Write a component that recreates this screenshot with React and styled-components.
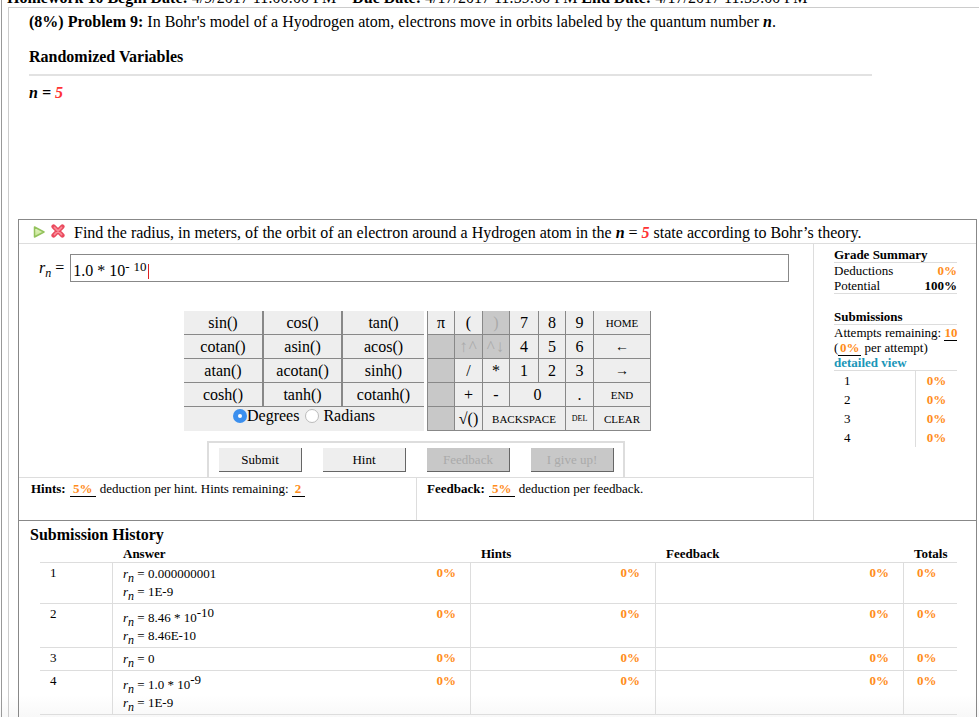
import React from 'react';
import styled, { createGlobalStyle } from 'styled-components';

const Global = createGlobalStyle`
  html, body { margin: 0; padding: 0; background: #fff; }
  body { font-family: "Liberation Serif", "Times New Roman", serif; color: #000; }
`;

const orange = '#ff8c1a';
const historyCols = '73px 358px 185px 248px 53px';

const Page = styled.div`
  width: 979px;
  height: 717px;
  overflow: hidden;
  box-sizing: border-box;
  padding-left: 1px;
  background: linear-gradient(#fff 695px, #f8f8f8 717px);
`;
const OuterRail = styled.div`
  border-left: 1px solid #999;
  height: 100%;
  padding-left: 6px;
`;
const TopStrip = styled.div`
  height: 7px;
  overflow: hidden;
  margin-left: -1px;
  font-size: 16px;
  line-height: 18px;
  white-space: pre;
  & > div { margin-top: -11px; }
`;
const Frame = styled.div`
  border-left: 1px solid #ccc;
  border-top: 1px solid #ccc;
  height: 100%;
  padding-left: 9px;
  padding-top: 5px;
`;
const Problem = styled.div`
  height: 206px;
  box-sizing: border-box;
  padding-left: 11px;
  font-size: 16px;
`;
const Line = styled.div`
  line-height: 18px;
  white-space: nowrap;
`;
const Heading = styled.div`
  font-weight: bold;
  line-height: 18px;
  margin-top: 17px;
  padding-bottom: 8px;
  width: 843px;
  border-bottom: 2px solid #e2e2e2;
`;
const VarLine = styled.div`
  margin-top: 8px;
  line-height: 18px;
  font-weight: bold;
  font-style: italic;
`;
const Red = styled.b`
  color: #f33;
  font-style: italic;
`;
const Box = styled.div`
  width: 959px;
  border: 1px solid #888;
  border-bottom: 0;
  box-sizing: border-box;
  height: 500px;
`;
const QuestionBar = styled.div`
  height: 24px;
  box-sizing: border-box;
  display: flex;
  align-items: center;
  padding: 1px 0 0 14px;
  border-bottom: 1px solid #ddd;
  font-size: 16px;
  white-space: nowrap;
`;
const QuestionText = styled.span`
  margin-left: 9px;
  margin-top: 1px;
`;
const Body = styled.div`
  height: 276px;
  display: grid;
  grid-template-columns: 795px 1fr;
  border-bottom: 1px solid #888;
`;
const Main = styled.div`
  border-right: 1px solid #ddd;
  display: flex;
  flex-direction: column;
`;
const AnswerRow = styled.div`
  display: flex;
  align-items: center;
  gap: 6px;
  padding: 10px 0 0 20px;
  font-size: 16px;
`;
const AnswerInput = styled.div`
  width: 715px;
  height: 26px;
  border: 1px solid #888;
  line-height: 31px;
  padding-left: 2px;
  font-size: 16px;
`;
const Caret = styled.span`
  display: inline-block;
  width: 1px;
  height: 15px;
  margin-left: 1px;
  background: #d22;
  vertical-align: -3px;
`;
const Sup = styled.span`
  font-size: 13px;
  line-height: 0;
  vertical-align: 5px;
`;
const Rn = styled.span`
  font-style: italic;
`;
const Sub = styled.sub`
  font-style: italic;
  font-size: 12px;
  line-height: 0;
`;
const Keypad = styled.div`
  display: flex;
  gap: 3px;
  margin: 29px 0 0 165px;
`;
const FuncPad = styled.div`
  display: grid;
  grid-template-columns: 80px 79px 81px;
  grid-template-rows: repeat(5, 24px);
  width: 240px;
`;
const NumPad = styled.div`
  display: grid;
  grid-template-columns: 27px 28px 27px 29px 27px 28px 57px;
  grid-template-rows: repeat(5, 24px);
  border-left: 1px solid #888;
`;
const Key = styled.div`
  display: flex;
  align-items: center;
  justify-content: center;
  background: ${(p) => (p.$off ? '#c8c8c8' : '#eee')};
  color: ${(p) => (p.$off ? '#aaa' : '#000')};
  border-right: 1px solid #888;
  border-bottom: 1px solid #888;
  box-sizing: border-box;
  font-size: ${(p) => p.$size || 16}px;
  grid-column: span ${(p) => p.$span || 1};
  white-space: nowrap;
`;
const ArrowKey = styled(Key)`
  letter-spacing: 1px;
`;
const FuncKey = styled(Key)`
  border-right: 2px solid #888;
  &:nth-child(3n) { border-right: 0; }
`;
const AngleRow = styled.div`
  grid-column: span 3;
  background: #eee;
  display: flex;
  align-items: flex-start;
  justify-content: center;
  font-size: 16px;
  line-height: 18px;
  padding-right: 3px;
`;
const Radio = styled.span`
  width: 14px;
  height: 14px;
  border-radius: 50%;
  box-sizing: border-box;
  margin: ${(p) => (p.$on ? '2px 0 0 3px' : '2px 4px 0 6px')};
  background: ${(p) => (p.$on ? '#3b8fee' : '#fff')};
  border: ${(p) => (p.$on ? '0' : '1px solid #bbb')};
  display: flex;
  align-items: center;
  justify-content: center;
  &::after {
    content: '';
    width: 4px;
    height: 4px;
    border-radius: 50%;
    background: ${(p) => (p.$on ? '#fff' : 'transparent')};
  }
`;
const ButtonBar = styled.div`
  width: 418px;
  height: 36px;
  box-sizing: border-box;
  margin: 10px 0 0 188px;
  border: 2px solid #ddd;
  border-bottom: 0;
  padding: 5px 0 0 10px;
  display: flex;
  gap: 21px;
`;
const Btn = styled.div`
  width: 83px;
  height: 24px;
  box-sizing: border-box;
  display: flex;
  align-items: center;
  justify-content: center;
  background: ${(p) => (p.$off ? '#c8c8c8' : '#eee')};
  color: ${(p) => (p.$off ? '#aaa' : '#000')};
  border-right: 1px solid #666;
  border-bottom: 1px solid #666;
  font-size: 13px;
`;
const Deductions = styled.div`
  flex: 1;
  display: grid;
  grid-template-columns: 398px 1fr;
  border-top: 1px solid #ddd;
  font-size: 13px;
`;
const DeductCell = styled.div`
  padding: 3px 0 0 ${(p) => p.$pad}px;
  line-height: 16px;
  white-space: nowrap;
  ${(p) => p.$divider && 'border-right: 1px solid #ddd;'}
`;
const Blank = styled.span`
  display: inline-block;
  border-bottom: 1px solid #000;
  color: ${orange};
  font-weight: bold;
  text-align: center;
  width: ${(p) => p.$w}px;
  margin: 0 ${(p) => p.$m ?? 4}px;
  line-height: 15px;
`;
const Side = styled.div`
  padding: 3px 0 0 20px;
  width: 123px;
  font-size: 13px;
`;
const SideTitle = styled.div`
  font-weight: bold;
  line-height: 15px;
  border-bottom: 1px solid #ddd;
`;
const SideRow = styled.div`
  display: flex;
  justify-content: space-between;
  line-height: 15px;
  ${(p) => p.$ruled && 'border-bottom: 1px solid #ddd;'}
`;
const SideLine = styled.div`
  height: 15px;
  line-height: 15px;
  white-space: nowrap;
`;
const Gap = styled.div`
  height: 15px;
`;
const Pct = styled.b`
  color: ${(p) => p.$c || orange};
`;
const DetailLink = styled.div`
  color: #1a96b8;
  font-weight: bold;
  line-height: 15px;
  border-bottom: 1px solid #ddd;
`;
const AttemptTable = styled.div`
  display: grid;
  grid-template-columns: 82px 41px;
  grid-auto-rows: 19px;
  height: 81px;
`;
const AttemptNo = styled.div`
  border-right: 1px solid #ddd;
  padding-left: 10px;
  line-height: 19px;
`;
const AttemptPct = styled.div`
  text-align: center;
  line-height: 19px;
`;
const History = styled.div`
  padding: 5px 0 0 11px;
`;
const HistoryTitle = styled.div`
  font-size: 16px;
  font-weight: bold;
  line-height: 18px;
`;
const Table = styled.div`
  margin-left: 10px;
  width: 917px;
  font-size: 13px;
`;
const HeadRow = styled.div`
  display: grid;
  grid-template-columns: ${historyCols};
  height: 15px;
  margin-top: 2px;
  font-weight: bold;
  line-height: 15px;
  padding-bottom: 1px;
  border-bottom: 1px solid #ddd;
`;
const HeadCell = styled.div`
  padding-left: ${(p) => p.$pad || 0}px;
`;
const Row = styled.div`
  display: grid;
  grid-template-columns: ${historyCols};
  height: ${(p) => p.$h}px;
  box-sizing: border-box;
  border-bottom: 1px solid #ddd;
`;
const Cell = styled.div`
  padding: 2px 0 0 ${(p) => p.$pad || 0}px;
  line-height: 16px;
  border-right: 1px solid #ddd;
  ${(p) => p.$last && 'border-right: 0;'}
`;
const PctCell = styled(Cell)`
  text-align: right;
  padding-right: ${(p) => p.$right}px;
`;
const AnswerCell = styled(Cell)`
  display: grid;
  grid-template-columns: 1fr auto;
  align-content: start;
  padding-right: 14px;
`;
const AnswerLines = styled.div`
  margin-top: ${(p) => p.$top || 0}px;
`;
const AnswerLine = styled.div`
  height: 18px;
  line-height: 18px;
  white-space: nowrap;
`;

const Play = () => (
  <svg width="12" height="12" viewBox="0 0 12 12">
    <defs>
      <linearGradient id="playFill" x1="0" y1="0" x2="0" y2="1">
        <stop offset="0" stopColor="#e6f5c8" />
        <stop offset="1" stopColor="#c4e48e" />
      </linearGradient>
    </defs>
    <path d="M1.5 1 L11 6 L1.5 11 Z" fill="url(#playFill)" stroke="#93c25c" strokeWidth="1.5" strokeLinejoin="round" />
  </svg>
);
const Cross = () => (
  <svg width="14" height="14" viewBox="0 0 14 14" style={{ marginLeft: 6, marginTop: -2 }}>
    <path d="M2.6 2.6 L11.4 11.4 M11.4 2.6 L2.6 11.4" stroke="#ea4a5e" strokeWidth="4.4" strokeLinecap="round" />
    <path d="M3.4 3.4 L10.6 10.6 M10.6 3.4 L3.4 10.6" stroke="#f98c98" strokeWidth="1.6" strokeLinecap="round" />
  </svg>
);

const R = () => <><Rn>r</Rn><Sub>n</Sub></>;

const funcs = ['sin()', 'cos()', 'tan()', 'cotan()', 'asin()', 'acos()', 'atan()', 'acotan()', 'sinh()', 'cosh()', 'tanh()', 'cotanh()'];

const rows = [
  { h: 41, n: 1, top: 0, a: [<>= 0.000000001</>, <>= 1E-9</>] },
  { h: 44, n: 2, top: 3, a: [<>= 8.46 * 10<Sup>-10</Sup></>, <>= 8.46E-10</>] },
  { h: 23, n: 3, top: 0, a: [<>= 0</>] },
  { h: 44, n: 4, top: 3, a: [<>= 1.0 * 10<Sup>-9</Sup></>, <>= 1E-9</>] },
];

export default function App() {
  return (
    <Page>
      <Global />
      <OuterRail>
        <TopStrip>
          <div><b>Homework 10 Begin Date:</b> 4/9/2017 11:00:00 PM    <b>Due Date:</b> 4/17/2017 11:59:00 PM <b>End Date:</b> 4/17/2017 11:59:00 PM</div>
        </TopStrip>
        <Frame>
          <Problem>
            <Line><b>(8%) Problem 9:</b> In Bohr's model of a Hyodrogen atom, electrons move in orbits labeled by the quantum number <b><i>n</i></b>.</Line>
            <Heading>Randomized Variables</Heading>
            <VarLine>n = <Red>5</Red></VarLine>
          </Problem>
          <Box>
            <QuestionBar>
              <Play />
              <Cross />
              <QuestionText>Find the radius, in meters, of the orbit of an electron around a Hydrogen atom in the <b><i>n</i></b> = <Red>5</Red> state according to Bohr’s theory.</QuestionText>
            </QuestionBar>
            <Body>
              <Main>
                <AnswerRow>
                  <span><R /> =</span>
                  <AnswerInput>1.0 * 10<Sup>-</Sup> <Sup>10</Sup><Caret /></AnswerInput>
                </AnswerRow>
                <Keypad>
                  <FuncPad>
                    {funcs.map((f) => <FuncKey key={f}>{f}</FuncKey>)}
                    <AngleRow><Radio $on />Degrees<Radio />Radians</AngleRow>
                  </FuncPad>
                  <NumPad>
                    <Key>π</Key><Key>(</Key><Key $off>)</Key><Key>7</Key><Key>8</Key><Key>9</Key><Key $size={11}>HOME</Key>
                    <Key $off /><ArrowKey $off $size={17}>↑^</ArrowKey><ArrowKey $off $size={17}>^↓</ArrowKey><Key>4</Key><Key>5</Key><Key>6</Key><Key $size={14}>←</Key>
                    <Key $off /><Key>/</Key><Key>*</Key><Key>1</Key><Key>2</Key><Key>3</Key><Key $size={14}>→</Key>
                    <Key $off /><Key>+</Key><Key>-</Key><Key $span={2}>0</Key><Key>.</Key><Key $size={11}>END</Key>
                    <Key $off /><Key>√()</Key><Key $span={3} $size={11}>BACKSPACE</Key><Key $size={8}>DEL</Key><Key $size={11}>CLEAR</Key>
                  </NumPad>
                </Keypad>
                <ButtonBar>
                  <Btn>Submit</Btn>
                  <Btn>Hint</Btn>
                  <Btn $off>Feedback</Btn>
                  <Btn $off>I give up!</Btn>
                </ButtonBar>
                <Deductions>
                  <DeductCell $pad={12} $divider>
                    <b>Hints:</b><Blank $w={26}>5%</Blank>deduction per hint. Hints remaining:<Blank $w={13} $m={3}>2</Blank>
                  </DeductCell>
                  <DeductCell $pad={10}>
                    <b>Feedback:</b><Blank $w={26}>5%</Blank>deduction per feedback.
                  </DeductCell>
                </Deductions>
              </Main>
              <Side>
                <SideTitle>Grade Summary</SideTitle>
                <SideRow><span>Deductions</span><Pct>0%</Pct></SideRow>
                <SideRow $ruled><span>Potential</span><Pct $c="#000">100%</Pct></SideRow>
                <Gap />
                <SideTitle>Submissions</SideTitle>
                <SideLine>Attempts remaining: <Blank $w={13} $m={0}>10</Blank></SideLine>
                <SideLine>(<Blank $w={23} $m={0}>0%</Blank> per attempt)</SideLine>
                <DetailLink>detailed view</DetailLink>
                <AttemptTable>
                  {[1, 2, 3, 4].map((n) => (
                    <React.Fragment key={n}>
                      <AttemptNo>{n}</AttemptNo>
                      <AttemptPct><Pct>0%</Pct></AttemptPct>
                    </React.Fragment>
                  ))}
                </AttemptTable>
              </Side>
            </Body>
            <History>
              <HistoryTitle>Submission History</HistoryTitle>
              <Table>
                <HeadRow>
                  <HeadCell />
                  <HeadCell $pad={10}>Answer</HeadCell>
                  <HeadCell $pad={10}>Hints</HeadCell>
                  <HeadCell $pad={10}>Feedback</HeadCell>
                  <HeadCell $pad={10}>Totals</HeadCell>
                </HeadRow>
                {rows.map((r) => (
                  <Row key={r.n} $h={r.h}>
                    <Cell $pad={10}>{r.n}</Cell>
                    <AnswerCell $pad={10}>
                      <AnswerLines $top={r.top}>
                        {r.a.map((line, i) => <AnswerLine key={i}><R /> {line}</AnswerLine>)}
                      </AnswerLines>
                      <Pct>0%</Pct>
                    </AnswerCell>
                    <PctCell $right={15}><Pct>0%</Pct></PctCell>
                    <PctCell $right={14}><Pct>0%</Pct></PctCell>
                    <Cell $pad={13} $last><Pct>0%</Pct></Cell>
                  </Row>
                ))}
              </Table>
            </History>
          </Box>
        </Frame>
      </OuterRail>
    </Page>
  );
}
